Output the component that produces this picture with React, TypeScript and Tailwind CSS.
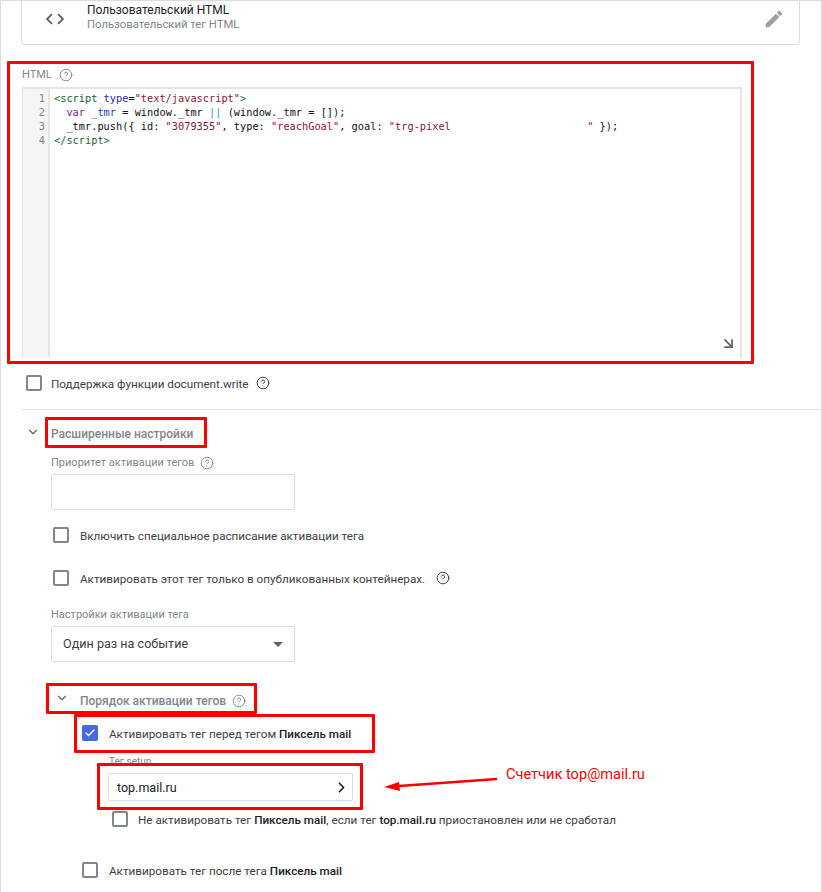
import React from 'react';
import { ArrowDownRight, Check, ChevronDown, ChevronRight, CircleHelp } from 'lucide-react';

const Box: React.FC<{ checked?: boolean; className?: string }> = ({ checked, className = '' }) =>
  checked ? (
    <span className={`flex h-4 w-4 shrink-0 items-center justify-center rounded-[2px] bg-[#4669e0] ${className}`}>
      <Check size={12} strokeWidth={3} color="#fff" />
    </span>
  ) : (
    <span className={`block h-4 w-4 shrink-0 rounded-[2px] border-2 border-[#80868b] ${className}`} />
  );

const Help: React.FC<{ className?: string; dark?: boolean }> = ({ className = '', dark }) => (
  <CircleHelp size={14} strokeWidth={1.4} color={dark ? '#202124' : '#70757a'} className={`shrink-0 ${className}`} />
);

const RedBox: React.FC<{ className: string }> = ({ className }) => (
  <div className={`pointer-events-none absolute rounded-[1px] border-[3px] border-[#ff0000] ${className}`} />
);

const S: React.FC<{ c: string; children: React.ReactNode }> = ({ c, children }) => <span className={c}>{children}</span>;

export default function App() {
  return (
    <div className="relative h-[892px] w-[822px] overflow-hidden border-x border-t border-[#dadce0] bg-white pl-px font-['Roboto',sans-serif] text-[11.7px] text-[#3c4043]">
      {/* tag type card */}
      <div className="ml-[19px] flex h-[44px] w-[779px] items-center rounded-b-[4px] border-x border-b border-[#dadce0]">
        <svg viewBox="0 0 24 24" className="mb-[8px] ml-[22px] h-[22px] w-[22px]" fill="#5f6368">
          <path d="M9.4 16.6L4.8 12l4.6-4.6L8 6l-6 6 6 6 1.4-1.4zm5.2 0l4.6-4.6-4.6-4.6L16 6l6 6-6 6-1.4-1.4z" />
        </svg>
        <div className="ml-[21px] flex flex-col pb-[11px]">
          <span className="text-[12px] leading-[14px] text-[#202124]">Пользовательский HTML</span>
          <span className="text-[11.3px] leading-[15px] text-[#80868b]">Пользовательский тег HTML</span>
        </div>
        <svg viewBox="0 0 24 24" className="mb-[8px] ml-auto mr-[14px] h-[22px] w-[22px]" fill="#9aa0a6">
          <path d="M3 17.25V21h3.75L17.81 9.94l-3.75-3.75L3 17.25zM20.71 7.04c.39-.39.39-1.02 0-1.41l-2.34-2.34c-.39-.39-1.02-.39-1.41 0l-1.83 1.83 3.75 3.75 1.83-1.83z" />
        </svg>
      </div>

      <div className="ml-[20px] mt-[23px] flex h-[14px] items-center gap-[7px] text-[11px] text-[#80868b]">
        HTML <Help />
      </div>

      {/* code editor */}
      <div className="relative ml-[20px] mt-[5px] flex h-[271px] w-[720px] border-t-2 border-l border-r-2 border-[#e4e5e7] font-['DejaVu_Sans_Mono',monospace] text-[10.3px] leading-[14px]">
        <div className="w-[27px] shrink-0 border-r-2 border-[#e6e6e6] bg-[#f5f5f5] pt-[2px] pr-[3px] text-right text-[#80868b]">
          <div>1</div>
          <div>2</div>
          <div>3</div>
          <div>4</div>
        </div>
        <pre className="pt-[2px] pl-[4px] font-['DejaVu_Sans_Mono',monospace] text-[#111]">
          <div>
            <S c="text-[#1a5f3a]">{'<script'}</S> <S c="text-[#2a2aa8]">type</S>=<S c="text-[#8a1538]">"text/javascript"</S>
            <S c="text-[#1a5f3a]">{'>'}</S>
          </div>
          <div>
            {'  '}
            <S c="text-[#7a2a90]">var</S> <S c="text-[#1a3fc0]">_tmr</S> = window._tmr <S c="text-[#3f8fd0]">||</S> (window._tmr = []);
          </div>
          <div>
            {'  '}_tmr.push({'{'} id: <S c="text-[#8a1538]">"3079355"</S>, type: <S c="text-[#8a1538]">"reachGoal"</S>, goal:{' '}
            <S c="text-[#8a1538]">{'"trg-pixel                      "'}</S> {'});'}
          </div>
          <div>
            <S c="text-[#1a5f3a]">{'</script>'}</S>
          </div>
        </pre>
        <ArrowDownRight size={17} strokeWidth={2.4} color="#5f6368" className="absolute right-[3px] bottom-[6px]" />
      </div>

      <div className="ml-[24px] mt-[17px] flex h-4 items-center">
        <Box />
        <span className="ml-[9px] pt-[3px]">Поддержка функции document.write</span>
        <Help dark className="ml-[7px]" />
      </div>

      <div className="ml-[20px] mt-[18px] border-t border-[#e4e5e7]" />

      <div className="mt-[16px] flex h-[16px] items-center">
        <ChevronDown size={14} strokeWidth={2} color="#5f6368" className="ml-[24px] -translate-y-[2px]" />
        <span className="ml-[11px] text-[12px] font-medium text-[#80868b]">Расширенные настройки</span>
      </div>

      <div className="ml-[49px] mt-[14px] flex h-[14px] items-center text-[11px] text-[#80868b]">
        Приоритет активации тегов <Help className="ml-[6px]" />
      </div>
      <div className="ml-[49px] mt-[4px] h-[36px] w-[244px] rounded-[3px] border border-[#dadce0]" />

      <div className="ml-[51px] mt-[17px] flex h-4 items-center">
        <Box />
        <span className="ml-[11px] pt-[3px]">Включить специальное расписание активации тега</span>
      </div>
      <div className="ml-[51px] mt-[27px] flex h-4 items-center">
        <Box />
        <span className="ml-[11px] pt-[3px]">Активировать этот тег только в опубликованных контейнерах.</span>
        <Help dark className="ml-[11px]" />
      </div>

      <div className="ml-[49px] mt-[21px] flex h-[14px] items-center pt-[2px] text-[11px] text-[#80868b]">Настройки активации тега</div>
      <div className="ml-[49px] mt-[5px] flex h-[36px] w-[244px] items-center rounded-[3px] border border-[#dadce0] pl-[11px] text-[12.6px] text-[#3c4043]">
        Один раз на событие
        <span className="ml-auto mr-[11px] h-0 w-0 border-x-[5px] border-t-[5px] border-x-transparent border-t-[#5f6368]" />
      </div>

      <div className="mt-[31px] flex h-4 items-center">
        <ChevronDown size={14} strokeWidth={2} color="#5f6368" className="ml-[53px] -translate-y-[3px]" />
        <span className="ml-[11px] text-[12px] font-medium text-[#80868b]">Порядок активации тегов</span>
        <Help className="ml-[6px]" />
      </div>

      <div className="ml-[80px] mt-[16px] flex h-4 items-center">
        <Box checked />
        <span className="ml-[11px] pt-[3px]">
          Активировать тег перед тегом <b className="font-medium text-[#202124]">Пиксель mail</b>
        </span>
      </div>

      <div className="ml-[107px] mt-[14px] h-[13px] text-[10px] leading-[13px] text-[#80868b]">Тег setup</div>
      <div className="ml-[106px] mt-[5px] flex h-[28px] w-[245px] items-center rounded-[2px] border border-[#dadce0] pl-[8px] text-[12.5px] text-[#202124]">
        <span className="pt-[2px]">top.mail.ru</span>
        <ChevronRight size={17} strokeWidth={2.4} color="#202124" className="ml-auto mr-[2px]" />
      </div>

      <div className="ml-[110px] mt-[10px] flex h-4 items-center">
        <Box />
        <span className="ml-[10px] pt-[3px]">
          Не активировать тег <b className="font-medium text-[#202124]">Пиксель mail</b>, если тег{' '}
          <b className="font-medium text-[#202124]">top.mail.ru</b> приостановлен или не сработал
        </span>
      </div>

      <div className="ml-[80px] mt-[35px] flex h-4 items-center">
        <Box />
        <span className="ml-[11px] pt-[3px]">
          Активировать тег после тега <b className="font-medium text-[#202124]">Пиксель mail</b>
        </span>
      </div>

      {/* red annotations drawn over the screenshot */}
      <RedBox className="left-[6px] top-[60px] h-[303px] w-[747px]" />
      <RedBox className="left-[44px] top-[416px] h-[31px] w-[162px]" />
      <RedBox className="left-[45px] top-[682px] h-[31px] w-[211px]" />
      <RedBox className="left-[73px] top-[713px] h-[39px] w-[301px]" />
      <RedBox className="left-[96px] top-[762px] h-[47px] w-[266px]" />
      <span className="absolute left-[505px] top-[764px] text-[14.6px] leading-[18px] text-[#ff0000]">Счетчик top@mail.ru</span>
      <svg className="absolute left-[381px] top-[770px]" width="120" height="24" viewBox="0 0 120 24">
        <path d="M115 8L17 15" stroke="#ff0000" strokeWidth="2.5" fill="none" />
        <path d="M2 16L17 11L18 20Z" fill="#ff0000" />
      </svg>
    </div>
  );
}
